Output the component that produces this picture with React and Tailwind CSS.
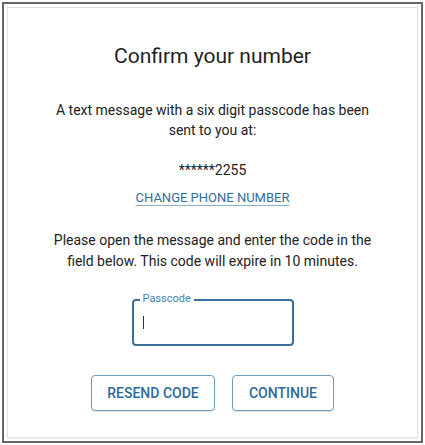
export default function App() {
	return (
		<div className="w-[425px] h-[445px] bg-white p-[2px]">
			<div className="h-full w-[421px] border-2 border-[#666] p-[3px]">
				<div
					className="h-full border border-[#e2e2e2] bg-white flex flex-col items-center text-center text-[#222] shadow-[0_1px_2px_rgba(0,0,0,0.08)]"
					style={{ fontFamily: "Roboto, 'Liberation Sans', sans-serif" }}
				>
					<h1 className="mt-[36px] text-[21px] leading-[24px] text-[#1f1f1f]">
						Confirm your number
					</h1>
					<p className="mt-[32px] text-[14px] leading-[20px] w-[330px]">
						A text message with a six digit passcode has been sent to you at:
					</p>
					<p className="mt-[20px] text-[14px] leading-[20px]">******2255</p>
					<a
						href="#"
						className="mt-[8px] text-[13px] leading-[20px] text-[#2f6e9e] underline decoration-[#8fb1cc] underline-offset-[3px]"
					>
						CHANGE PHONE NUMBER
					</a>
					<p className="mt-[22px] text-[14px] leading-[21px] w-[330px]">
						Please open the message and enter the code in the field below. This
						code will expire in 10 minutes.
					</p>
					<div className="relative mt-[27px] w-[162px] h-[47px] border-2 border-[#3a709c] rounded-[4px]">
						<span className="absolute -top-[9px] left-[6px] bg-white px-[3px] text-[11px] leading-[14px] text-[#4a82ad]">
							Passcode
						</span>
						<div className="absolute left-[9px] top-[15px] w-px h-[13px] bg-[#333]" />
					</div>
					<div className="mt-[29px] flex gap-[17px]">
						<button className="w-[124px] h-[36px] border border-[#6d9bbf] rounded-[4px] text-[14px] font-medium text-[#2e6a99] shadow-[0_1px_1px_rgba(0,0,0,0.12)]">
							RESEND CODE
						</button>
						<button className="w-[102px] h-[36px] border border-[#6d9bbf] rounded-[4px] text-[14px] font-medium text-[#2e6a99] shadow-[0_1px_1px_rgba(0,0,0,0.12)]">
							CONTINUE
						</button>
					</div>
				</div>
			</div>
		</div>
	);
}
